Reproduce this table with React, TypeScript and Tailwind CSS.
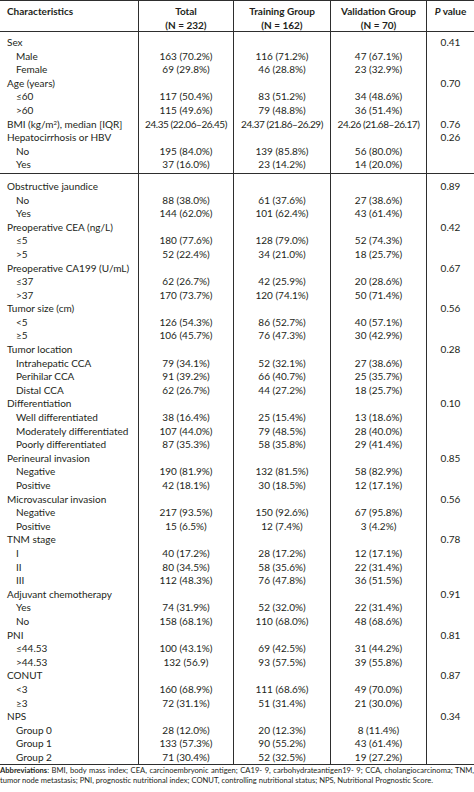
import type { ReactNode } from 'react';

type Row = {
  label: ReactNode;
  sub?: boolean;
  tight?: boolean;
  total?: string;
  train?: string;
  valid?: string;
  p?: string;
};

const PART_ONE: Row[] = [
  { label: 'Sex', p: '0.41' },
  { label: 'Male', sub: true, total: '163 (70.2%)', train: '116 (71.2%)', valid: '47 (67.1%)' },
  { label: 'Female', sub: true, total: '69 (29.8%)', train: '46 (28.8%)', valid: '23 (32.9%)' },
  { label: 'Age (years)', p: '0.70' },
  { label: '≤60', sub: true, total: '117 (50.4%)', train: '83 (51.2%)', valid: '34 (48.6%)' },
  { label: '>60', sub: true, total: '115 (49.6%)', train: '79 (48.8%)', valid: '36 (51.4%)' },
  {
    label: (
      <>
        BMI (kg/m<sup className="text-[6px] leading-none">2</sup>), median [IQR]
      </>
    ),
    tight: true,
    total: '24.35 (22.06–26.45)',
    train: '24.37 (21.86–26.29)',
    valid: '24.26 (21.68–26.17)',
    p: '0.76',
  },
  { label: 'Hepatocirrhosis or HBV', p: '0.26' },
  { label: 'No', sub: true, total: '195 (84.0%)', train: '139 (85.8%)', valid: '56 (80.0%)' },
  { label: 'Yes', sub: true, total: '37 (16.0%)', train: '23 (14.2%)', valid: '14 (20.0%)' },
];

const PART_TWO: Row[] = [
  { label: 'Obstructive jaundice', p: '0.89' },
  { label: 'No', sub: true, total: '88 (38.0%)', train: '61 (37.6%)', valid: '27 (38.6%)' },
  { label: 'Yes', sub: true, total: '144 (62.0%)', train: '101 (62.4%)', valid: '43 (61.4%)' },
  { label: 'Preoperative CEA (ng/L)', p: '0.42' },
  { label: '≤5', sub: true, total: '180 (77.6%)', train: '128 (79.0%)', valid: '52 (74.3%)' },
  { label: '>5', sub: true, total: '52 (22.4%)', train: '34 (21.0%)', valid: '18 (25.7%)' },
  { label: 'Preoperative CA199 (U/mL)', p: '0.67' },
  { label: '≤37', sub: true, total: '62 (26.7%)', train: '42 (25.9%)', valid: '20 (28.6%)' },
  { label: '>37', sub: true, total: '170 (73.7%)', train: '120 (74.1%)', valid: '50 (71.4%)' },
  { label: 'Tumor size (cm)', p: '0.56' },
  { label: '<5', sub: true, total: '126 (54.3%)', train: '86 (52.7%)', valid: '40 (57.1%)' },
  { label: '≥5', sub: true, total: '106 (45.7%)', train: '76 (47.3%)', valid: '30 (42.9%)' },
  { label: 'Tumor location', p: '0.28' },
  { label: 'Intrahepatic CCA', sub: true, total: '79 (34.1%)', train: '52 (32.1%)', valid: '27 (38.6%)' },
  { label: 'Perihilar CCA', sub: true, total: '91 (39.2%)', train: '66 (40.7%)', valid: '25 (35.7%)' },
  { label: 'Distal CCA', sub: true, total: '62 (26.7%)', train: '44 (27.2%)', valid: '18 (25.7%)' },
  { label: 'Differentiation', p: '0.10' },
  { label: 'Well differentiated', sub: true, total: '38 (16.4%)', train: '25 (15.4%)', valid: '13 (18.6%)' },
  { label: 'Moderately differentiated', sub: true, total: '107 (44.0%)', train: '79 (48.5%)', valid: '28 (40.0%)' },
  { label: 'Poorly differentiated', sub: true, total: '87 (35.3%)', train: '58 (35.8%)', valid: '29 (41.4%)' },
  { label: 'Perineural invasion', p: '0.85' },
  { label: 'Negative', sub: true, total: '190 (81.9%)', train: '132 (81.5%)', valid: '58 (82.9%)' },
  { label: 'Positive', sub: true, total: '42 (18.1%)', train: '30 (18.5%)', valid: '12 (17.1%)' },
  { label: 'Microvascular invasion', p: '0.56' },
  { label: 'Negative', sub: true, total: '217 (93.5%)', train: '150 (92.6%)', valid: '67 (95.8%)' },
  { label: 'Positive', sub: true, total: '15 (6.5%)', train: '12 (7.4%)', valid: '3 (4.2%)' },
  { label: 'TNM stage', p: '0.78' },
  { label: 'I', sub: true, total: '40 (17.2%)', train: '28 (17.2%)', valid: '12 (17.1%)' },
  { label: 'II', sub: true, total: '80 (34.5%)', train: '58 (35.6%)', valid: '22 (31.4%)' },
  { label: 'III', sub: true, total: '112 (48.3%)', train: '76 (47.8%)', valid: '36 (51.5%)' },
  { label: 'Adjuvant chemotherapy', p: '0.91' },
  { label: 'Yes', sub: true, total: '74 (31.9%)', train: '52 (32.0%)', valid: '22 (31.4%)' },
  { label: 'No', sub: true, total: '158 (68.1%)', train: '110 (68.0%)', valid: '48 (68.6%)' },
  { label: 'PNI', p: '0.81' },
  { label: '≤44.53', sub: true, total: '100 (43.1%)', train: '69 (42.5%)', valid: '31 (44.2%)' },
  { label: '>44.53', sub: true, total: '132 (56.9)', train: '93 (57.5%)', valid: '39 (55.8%)' },
  { label: 'CONUT', p: '0.87' },
  { label: '<3', sub: true, total: '160 (68.9%)', train: '111 (68.6%)', valid: '49 (70.0%)' },
  { label: '≥3', sub: true, total: '72 (31.1%)', train: '51 (31.4%)', valid: '21 (30.0%)' },
  { label: 'NPS', p: '0.34' },
  { label: 'Group 0', sub: true, total: '28 (12.0%)', train: '20 (12.3%)', valid: '8 (11.4%)' },
  { label: 'Group 1', sub: true, total: '133 (57.3%)', train: '90 (55.2%)', valid: '43 (61.4%)' },
  { label: 'Group 2', sub: true, total: '71 (30.4%)', train: '52 (32.5%)', valid: '19 (27.2%)' },
];

const GRID = 'grid grid-cols-[138px_95px_97px_96px_1fr]';
const CELL = 'h-[13.6px] leading-[13.6px] whitespace-nowrap';

// one block of the table, drawn column by column so the rules run unbroken
const Block = ({ rows, pad }: { rows: Row[]; pad: string }) => (
  <div className={GRID}>
    <div className={pad}>
      {rows.map((r, i) => (
        <div key={i} className={`${CELL} ${r.sub ? 'pl-[16px]' : 'pl-[7px]'}`}>
          {r.label}
        </div>
      ))}
    </div>
    {(['total', 'train', 'valid', 'p'] as const).map((k) => (
      <div key={k} className={`${pad} border-l border-[#2e2e2e] text-center`}>
        {rows.map((r, i) => (
          <div key={i} className={`${CELL} ${r.tight && k !== 'p' ? 'tracking-[-0.45px]' : ''}`}>
            {r[k] ?? ''}
          </div>
        ))}
      </div>
    ))}
  </div>
);

const Head = ({ top, bottom }: { top: ReactNode; bottom?: string }) => (
  <div className="border-l border-[#2e2e2e] pt-[4px] text-center font-bold">
    <div className={CELL}>{top}</div>
    {bottom && <div className={CELL}>{bottom}</div>}
  </div>
);

export default function App() {
  return (
    <div className="w-[474px] bg-white text-[10px] text-[#231f20] font-['Lato','Liberation_Sans',sans-serif]">
      <div className="border-y border-[#2e2e2e]">
        <div className={`${GRID} h-[31px] border-b border-[#2e2e2e]`}>
          <div className="pt-[4px] pl-[7px] font-bold">
            <div className={CELL}>Characteristics</div>
          </div>
          <Head top="Total" bottom="(N = 232)" />
          <Head top="Training Group" bottom="(N = 162)" />
          <Head top="Validation Group" bottom="(N = 70)" />
          <Head
            top={
              <>
                <i>P</i> value
              </>
            }
          />
        </div>
        <div className="border-b border-[#2e2e2e]">
          <Block rows={PART_ONE} pad="pt-[4px] pb-[1px]" />
        </div>
        <Block rows={PART_TWO} pad="pt-[6px] pb-[0px]" />
      </div>
      <div className="text-[7.6px] leading-[10px]">
        <div className="text-justify [text-align-last:justify] whitespace-nowrap">
          <b>Abbreviations</b>: BMI, body mass index; CEA, carcinoembryonic antigen; CA19- 9, carbohydrateantigen19- 9; CCA, cholangiocarcinoma; TNM,
        </div>
        <div>
          tumor node metastasis; PNI, prognostic nutritional index; CONUT, controlling nutritional status; NPS, Nutritional Prognostic Score.
        </div>
      </div>
    </div>
  );
}
